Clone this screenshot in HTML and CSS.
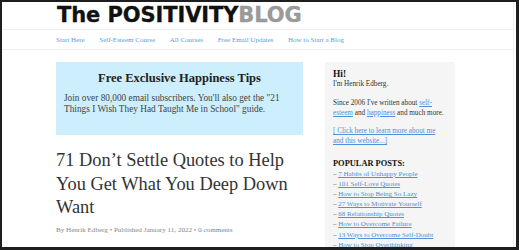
FILE: index.html
```html
<!DOCTYPE html>
<html lang="en">
<head>
    <meta charset="UTF-8">
    <meta name="viewport" content="width=device-width, initial-scale=1.0">
    <title>The Positivity Blog</title>
    <link rel="stylesheet" href="styles.css">
</head>
<body>
<div class="frame">
<div class="page">

    <!-- logo -->
    <header class="site-header">
        <div class="logo">The POSITIVITY<span class="logo-blog">BLOG</span></div>
    </header>

    <!-- top menu -->
    <nav class="site-nav">
        <a href="#">Start Here</a>
        <a href="#">Self-Esteem Course</a>
        <a href="#">All Courses</a>
        <a href="#">Free Email Updates</a>
        <a href="#">How to Start a Blog</a>
    </nav>

    <div class="main">
        <div class="content">
            <div class="optin">
                <h3>Free Exclusive Happiness Tips</h3>
                <p>Join over 80,000 email subscribers. You'll also get the "21 Things I Wish They Had Taught Me in School" guide.</p>
            </div>

            <h1 class="post-title">71 Don’t Settle Quotes to Help You Get What You Deep Down Want</h1>
            <p class="post-meta">By Henrik Edberg &bull; Published January 11, 2022 &bull; <a href="#">0 comments</a></p>
        </div>

        <aside class="sidebar">
            <h4>Hi!</h4>
            <p class="intro">I'm Henrik Edberg.</p>
            <p>Since 2006 I've written about <a href="#">self-esteem</a> and <a href="#">happiness</a> and much more.</p>
            <p class="about"><a href="#">[ Click here to learn more about me and this website...]</a></p>

            <h4 class="popular">POPULAR POSTS:</h4>
            <ul class="popular-list">
                <li><a href="#">7 Habits of Unhappy People</a></li>
                <li><a href="#">101 Self-Love Quotes</a></li>
                <li><a href="#">How to Stop Being So Lazy</a></li>
                <li><a href="#">27 Ways to Motivate Yourself</a></li>
                <li><a href="#">68 Relationship Quotes</a></li>
                <li><a href="#">How to Overcome Failure</a></li>
                <li><a href="#">13 Ways to Overcome Self-Doubt</a></li>
                <li><a href="#">How to Stop Overthinking</a></li>
            </ul>
        </aside>
    </div>

</div>
</div>
</body>
</html>
```

FILE: styles.css
```css
/* page frame */
body {
    margin: 0;
    background: #fff;
    font-family: "Liberation Serif", serif;
    color: #333;
}

.frame {
    width: 519px;
    height: 250px;
    box-sizing: border-box;
    border: 2px solid #1e1e1e;
    border-width: 2px 3px 3px 2px;
    overflow: hidden;
}

.page {
    width: 512px;
    height: 100%;
    box-sizing: border-box;
    border-right: 1px solid #efefef;
}

a {
    color: #4f8fdc;
}

/* logo */
.site-header {
    height: 27px;
    padding-left: 55px;
}

.logo {
    font-family: "DejaVu Sans", sans-serif;
    font-weight: bold;
    font-size: 21px;
    line-height: 27px;
    color: #111;
    letter-spacing: -0.1px;
    -webkit-text-stroke: 0.3px #111;
}

.logo-blog {
    color: #9a9a9a;
    -webkit-text-stroke: 0.3px #9a9a9a;
}

/* menu */
.site-nav {
    display: flex;
    gap: 14.7px;
    height: 19px;
    align-items: center;
    padding-left: 54px;
    border-top: 1px solid #f0f0f0;
    border-bottom: 1px solid #f0f0f0;
}

.site-nav a {
    font-size: 7px;
    color: #5b9be0;
    text-decoration: none;
}

/* two columns */
.main {
    display: flex;
    gap: 22px;
    padding: 12px 0 0 54px;
}

.content {
    width: 247px;
}

.optin {
    background: #cdeefc;
    height: 73px;
    box-sizing: border-box;
    padding: 10px 8px 0;
}

.optin h3 {
    margin: 0 0 7.5px;
    text-align: center;
    font-size: 12.5px;
    line-height: 13px;
    color: #222;
}

.optin p {
    margin: 0;
    font-size: 9.3px;
    line-height: 11px;
    color: #444;
}

.post-title {
    margin: 14px 0 0;
    font-weight: normal;
    font-size: 18.4px;
    line-height: 23.5px;
    color: #333;
}

.post-meta {
    margin: 5px 0 0;
    font-size: 7.1px;
    line-height: 10px;
    color: #888;
}

.post-meta a {
    text-decoration: none;
}

/* sidebar */
.sidebar {
    width: 130px;
    height: 200px;
    box-sizing: border-box;
    background: #f5f5f5;
    padding: 7px 9px 0 8px;
    font-size: 7.2px;
    line-height: 10px;
    color: #333;
}

.sidebar h4 {
    margin: 0;
    font-size: 9.4px;
    line-height: 10px;
    color: #111;
}

.sidebar p {
    margin: 0 0 8px;
}

.sidebar .intro {
    margin-bottom: 9px;
}

.sidebar .about {
    margin-bottom: 0;
}

.sidebar .popular {
    margin-top: 13px;
    font-size: 8.4px;
}

.popular-list {
    list-style: none;
    margin: 0;
    padding: 0;
    font-size: 7px;
    line-height: 10.1px;
}

.popular-list li::before {
    content: "– ";
}
```
